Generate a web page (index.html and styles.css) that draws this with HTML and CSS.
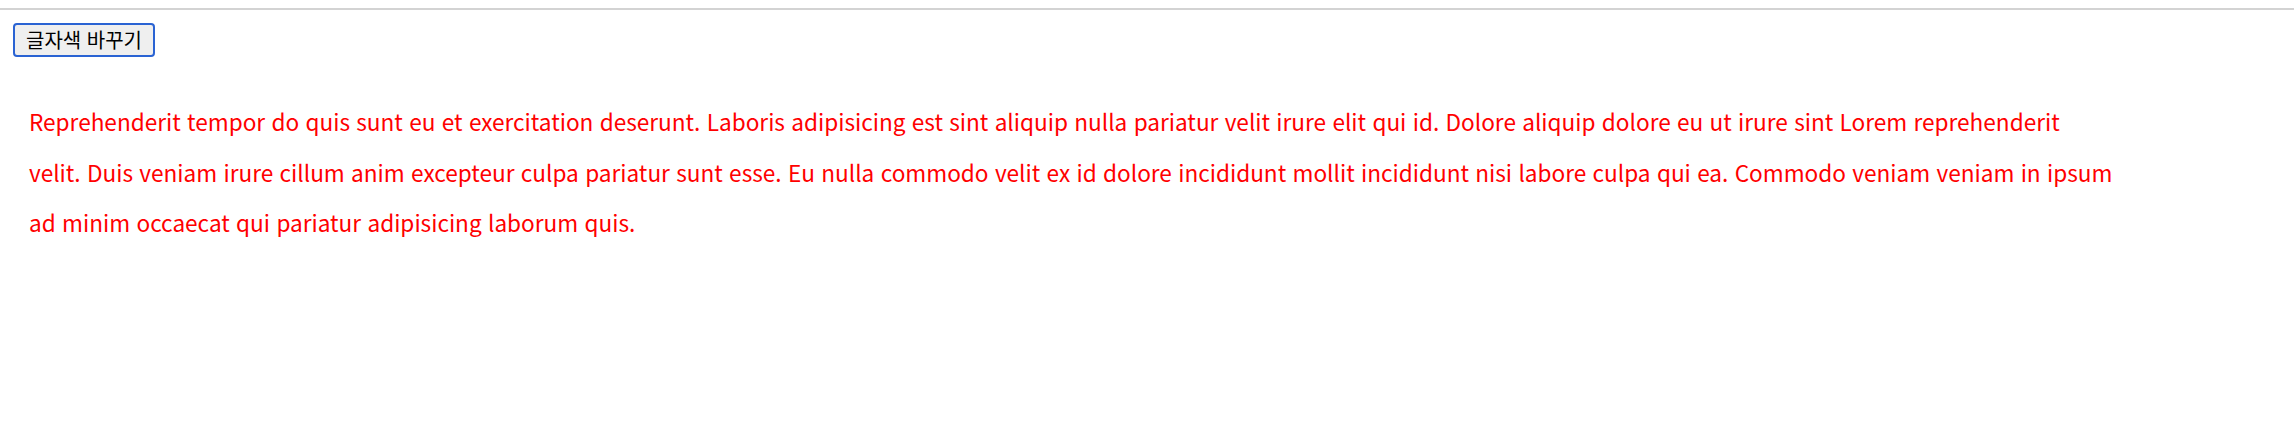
FILE: index.html
```html
<!DOCTYPE html>
<html lang="ko">
<head>
<meta charset="utf-8">
<title>글자색 바꾸기</title>
<link rel="stylesheet" href="styles.css">
</head>
<body>
<div class="topline"></div>
<main class="content">
  <button class="color-btn" type="button">글자색 바꾸기</button>
  <p class="text">Reprehenderit tempor do quis sunt eu et exercitation deserunt. Laboris adipisicing est sint aliquip nulla pariatur velit irure elit qui id. Dolore aliquip dolore eu ut irure sint Lorem reprehenderit<br>velit. Duis veniam irure cillum anim excepteur culpa pariatur sunt esse. Eu nulla commodo velit ex id dolore incididunt mollit incididunt nisi labore culpa qui ea. Commodo veniam veniam in ipsum<br>ad minim occaecat qui pariatur adipisicing laborum quis.</p>
</main>
</body>
</html>
```
FILE: styles.css
```css
html, body {
  margin: 0;
  padding: 0;
  background: #fff;
}
body {
  font-family: "Noto Sans CJK KR", "Noto Sans", sans-serif;
}
.topline {
  margin-top: 8px;
  border-top: 2px solid #d3d3d3;
}
.content {
  padding: 13px 0 0 13px;
}
.color-btn {
  display: block;
  box-sizing: border-box;
  width: 142px;
  height: 34px;
  padding: 0;
  font-family: "Noto Sans CJK KR", sans-serif;
  font-size: 20px;
  color: #000;
  background: #efefef;
  border: 2px solid #2a63d3;
  border-radius: 4px;
  line-height: 30px;
}
.text {
  margin: 40px 0 0 16px;
  width: 2200px;
  font-size: 22.6px;
  line-height: 50.5px;
  color: #f00;
}
```
